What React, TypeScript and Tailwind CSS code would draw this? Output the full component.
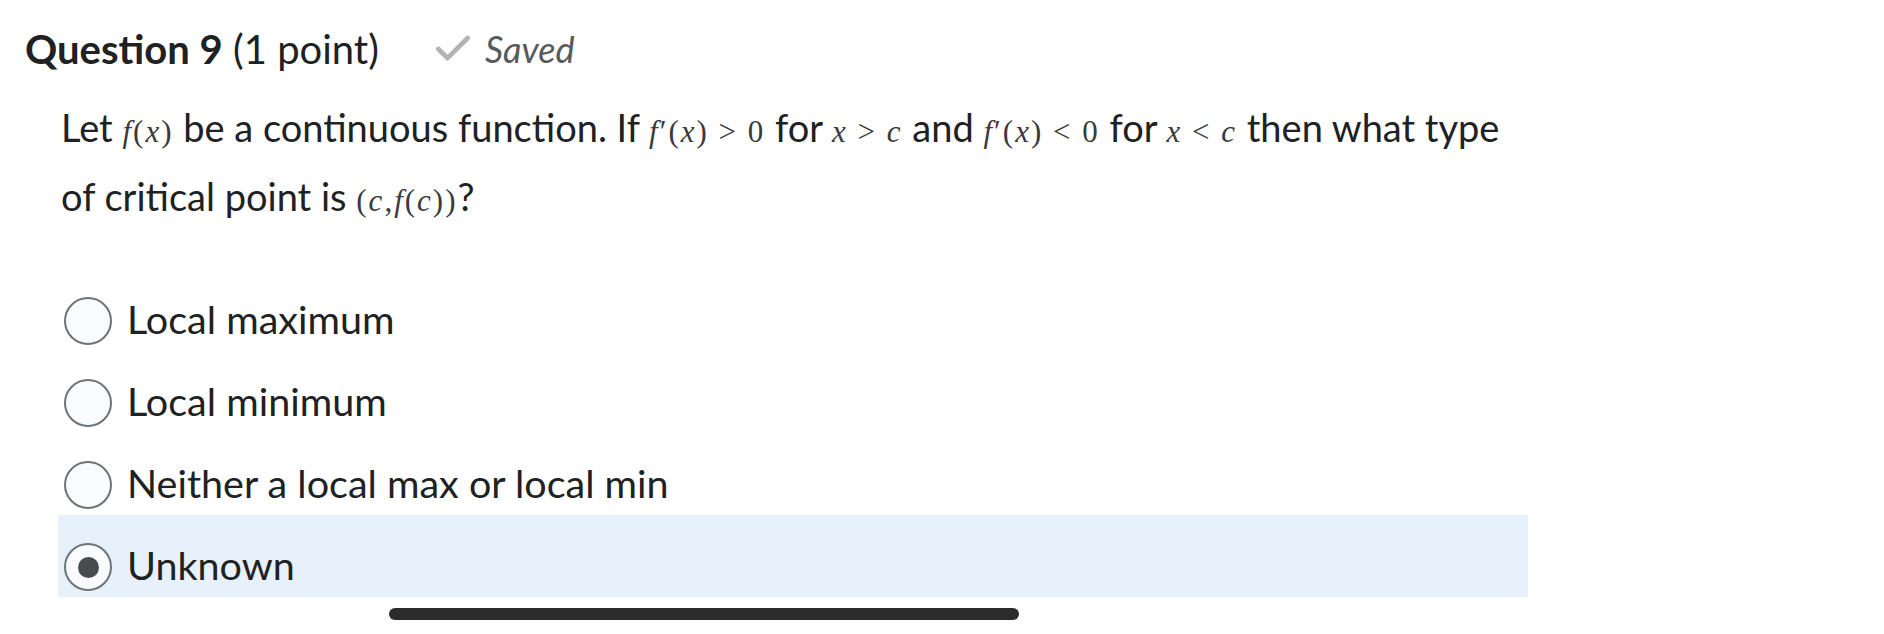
import { Check } from 'lucide-react';

const options = ['Local maximum', 'Local minimum', 'Neither a local max or local min', 'Unknown'];

const M = ({ children }: { children: React.ReactNode }) => (
  <span className="font-['Liberation_Serif',serif] text-[31px] leading-none tracking-[2px] text-[#3a3a3a]">
    {children}
  </span>
);

const I = ({ children }: { children: React.ReactNode }) => <i className="italic">{children}</i>;

export default function App() {
  const selected = 3;

  return (
    <div className="min-h-[634px] w-[1884px] bg-white font-['Lato',sans-serif] text-[#202122]">
      <div className="flex items-center pl-[25px] pt-[25px] text-[40px] leading-[48px]">
        <h2>
          <span className="font-bold">Question 9</span> (1 point)
        </h2>
        <div className="ml-[52px] flex items-center gap-[10px] text-[#565a5c]">
          <Check className="h-[44px] w-[44px] text-[#b1b4b6]" strokeWidth={2.6} />
          <span className="text-[36px] italic">Saved</span>
        </div>
      </div>

      <div className="ml-[58px] w-[1470px]">
        <p className="mt-[20px] pl-[3px] text-[38px] leading-[69px]">
          Let{' '}
          <M>
            <I>f</I>(<I>x</I>)
          </M>{' '}
          be a continuous function. If{' '}
          <M>
            <I>f</I>′(<I>x</I>) &gt; 0
          </M>{' '}
          for{' '}
          <M>
            <I>x</I> &gt; <I>c</I>
          </M>{' '}
          and{' '}
          <M>
            <I>f</I>′(<I>x</I>) &lt; 0
          </M>{' '}
          for{' '}
          <M>
            <I>x</I> &lt; <I>c</I>
          </M>{' '}
          then what type
          <br />
          of critical point is{' '}
          <M>
            (<I>c</I>,<I>f</I>(<I>c</I>))
          </M>
          ?
        </p>

        <div className="mt-[38px]">
          {options.map((opt, i) => (
            <label
              key={opt}
              className={`flex h-[82px] items-start gap-[15px] pl-[6px] pt-[28px] ${
                i === selected ? 'bg-[#e6f1fc]' : ''
              }`}
            >
              <span className="flex h-[48px] w-[48px] shrink-0 items-center justify-center rounded-full border-2 border-[#6e7376] bg-[#f9fbff]">
                {i === selected && <span className="h-[21px] w-[21px] rounded-full bg-[#494c4e]" />}
              </span>
              <span className="text-[39.5px] leading-[44px]">{opt}</span>
            </label>
          ))}
        </div>
      </div>

      <div className="ml-[389px] mt-[11px] h-[12px] w-[630px] rounded-full bg-[#2b2b2b]" />
    </div>
  );
}
